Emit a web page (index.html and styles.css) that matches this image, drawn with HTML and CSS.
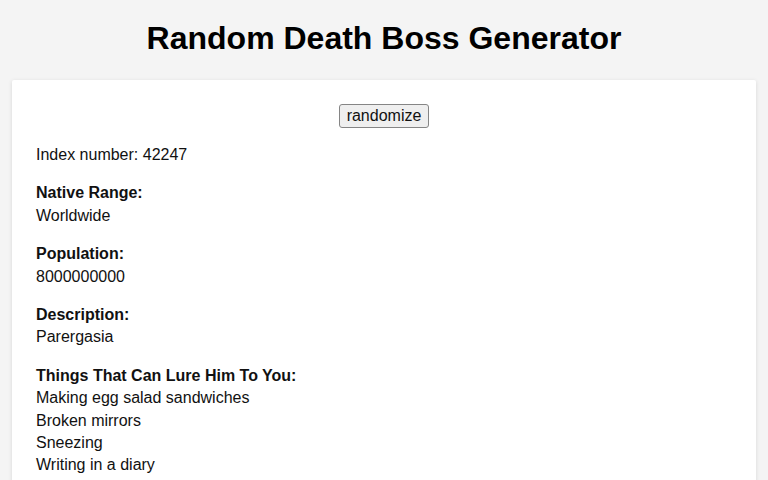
FILE: index.html
```html
<!DOCTYPE html>
<html lang="en">
<head>
<meta charset="utf-8">
<title>Random Death Boss Generator</title>
<link rel="stylesheet" href="styles.css">
</head>
<body>
<h1 class="title">Random Death Boss Generator</h1>
<main class="card">
  <div class="actions">
    <button class="randomize" type="button">randomize</button>
  </div>
  <p class="entry">Index number: 42247</p>
  <p class="entry"><strong>Native Range:</strong><br>Worldwide</p>
  <p class="entry"><strong>Population:</strong><br>8000000000</p>
  <p class="entry"><strong>Description:</strong><br>Parergasia</p>
  <p class="entry"><strong>Things That Can Lure Him To You:</strong><br>Making egg salad sandwiches<br>Broken mirrors<br>Sneezing<br>Writing in a diary</p>
</main>
</body>
</html>
```
FILE: styles.css
```css
html, body {
  margin: 0;
  padding: 0;
}

body {
  background: #f4f4f4;
  font-family: "Liberation Sans", Arial, sans-serif;
  font-size: 16px;
  line-height: 1.4;
  color: #111;
  padding: 0 12px;
}

.title {
  font-size: 32px;
  font-weight: bold;
  text-align: center;
  line-height: 37px;
  margin: 20px 0 23px;
  color: #000;
}

.card {
  background: #fff;
  border-radius: 2px;
  box-shadow: 0 1px 4px rgba(0, 0, 0, 0.12);
  padding: 24px;
}

.actions {
  display: flex;
  justify-content: center;
  margin-bottom: 16px;
}

.randomize {
  font-family: "Liberation Sans", Arial, sans-serif;
  font-size: 16px;
  color: #111;
  background: #efefef;
  border: 1px solid #858585;
  border-radius: 3px;
  padding: 1px 7px;
  line-height: 20px;
}

.entry {
  margin: 0 0 16px;
}
```
